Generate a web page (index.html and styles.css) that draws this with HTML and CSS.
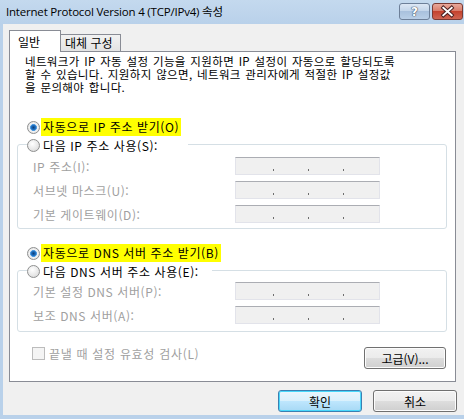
FILE: index.html
```html
<!DOCTYPE html>
<html lang="ko">
<head>
    <meta charset="UTF-8">
    <title>Internet Protocol Version 4 (TCP/IPv4) 속성</title>
    <link rel="stylesheet" href="styles.css">
</head>
<body>
    <div class="window">
        <div class="titlebar">
            <span class="title">Internet Protocol Version 4 (TCP/IPv4) 속성</span>
            <div class="caption-buttons">
                <span class="cap-btn help">?</span>
                <span class="cap-btn close">
                    <svg width="31" height="17" viewBox="0 0 31 17">
                        <path d="M11 4.5 L20 12.5 M20 4.5 L11 12.5" stroke="#4a2020" stroke-width="4" stroke-linecap="square" fill="none"/>
                        <path d="M11 4.5 L20 12.5 M20 4.5 L11 12.5" stroke="#ffffff" stroke-width="2" stroke-linecap="square" fill="none"/>
                    </svg>
                </span>
            </div>
        </div>
        <div class="client">
            <div class="tabs">
                <div class="tab active">일반</div>
                <div class="tab">대체 구성</div>
            </div>
            <div class="panel">
                <p class="desc">네트워크가 IP 자동 설정 기능을 지원하면 IP 설정이 자동으로 할당되도록<br>할 수 있습니다. 지원하지 않으면, 네트워크 관리자에게 적절한 IP 설정값<br>을 문의해야 합니다.</p>

                <label class="radio-row top"><span class="radio checked"></span><span class="hl">자동으로 IP 주소 받기(O)</span></label>
                <fieldset class="group first">
                    <legend class="ip-legend"><span class="radio-row"><span class="radio"></span><span class="radio-text">다음 IP 주소 사용(S):</span></span></legend>
                    <div class="field-row"><span class="field-label">IP 주소(I):</span><span class="ip-box"><i></i><i></i><i></i></span></div>
                    <div class="field-row"><span class="field-label">서브넷 마스크(U):</span><span class="ip-box"><i></i><i></i><i></i></span></div>
                    <div class="field-row"><span class="field-label">기본 게이트웨이(D):</span><span class="ip-box"><i></i><i></i><i></i></span></div>
                </fieldset>

                <label class="radio-row top dns"><span class="radio checked"></span><span class="hl">자동으로 DNS 서버 주소 받기(B)</span></label>
                <fieldset class="group second">
                    <legend class="dns-legend"><span class="radio-row"><span class="radio"></span><span class="radio-text">다음 DNS 서버 주소 사용(E):</span></span></legend>
                    <div class="field-row"><span class="field-label">기본 설정 DNS 서버(P):</span><span class="ip-box"><i></i><i></i><i></i></span></div>
                    <div class="field-row"><span class="field-label">보조 DNS 서버(A):</span><span class="ip-box"><i></i><i></i><i></i></span></div>
                </fieldset>

                <div class="bottom-row">
                    <label class="check-row"><span class="checkbox"></span>끝낼 때 설정 유효성 검사(L)</label>
                    <button class="btn advanced">고급(V)...</button>
                </div>
            </div>
            <div class="footer">
                <button class="btn default">확인</button>
                <button class="btn">취소</button>
            </div>
        </div>
    </div>
</body>
</html>
```

FILE: styles.css
```css
body {
    margin: 0;
    padding: 0;
    font-family: "Noto Sans CJK KR", "Liberation Sans", sans-serif;
    font-size: 12px;
}
.window {
    width: 464px;
    height: 419px;
    background-color: #b9d1ea;
    display: flex;
    flex-direction: column;
    box-sizing: border-box;
    overflow: hidden;
}
.titlebar {
    height: 24px;
    flex: none;
    display: flex;
    justify-content: space-between;
    background: linear-gradient(#c4d9ee, #b9d1ea);
}
.title {
    font-family: "Open Sans", "Noto Sans CJK KR", sans-serif;
    font-size: 11.5px;
    letter-spacing: -0.2px;
    line-height: 24px;
    padding-left: 6px;
    color: #000;
}
.caption-buttons {
    display: flex;
    gap: 2px;
    margin-top: 3px;
    margin-right: 1px;
}
.cap-btn {
    width: 31px;
    height: 17px;
    box-sizing: border-box;
    border: 1px solid #6d7f98;
    border-radius: 3px;
    display: flex;
    align-items: center;
    justify-content: center;
}
.help {
    background: linear-gradient(#dce7f4 0%, #c4d6ea 45%, #a9c1dd 50%, #b9cfe7 100%);
    color: #fff;
    font-family: "DejaVu Sans", sans-serif;
    font-weight: bold;
    font-size: 12px;
    text-shadow: 0 0 1px #3d4d63, 0 0 1px #3d4d63, 0 0 1px #3d4d63;
}
.close {
    border-color: #7a3a33;
    background: linear-gradient(#e9a99b 0%, #d97d6b 45%, #c4432f 50%, #cf6552 100%);
}
.close svg {
    display: block;
}
.client {
    flex: 1;
    margin-left: 3px;
    margin-bottom: 4px;
    background-color: #f0f0f0;
    padding: 6px 8px 3px 6px;
    display: flex;
    flex-direction: column;
}
.tabs {
    height: 21px;
    display: flex;
    align-items: flex-end;
}
.tab {
    height: 17px;
    width: 60px;
    box-sizing: border-box;
    padding-left: 4px;
    border: 1px solid #898c95;
    border-left: none;
    border-bottom: none;
    background: linear-gradient(#f2f2f2, #e3e3e3);
    display: flex;
    align-items: center;
    line-height: 14px;
}
.tab.active {
    width: 52px;
    height: 22px;
    margin-bottom: -1px;
    padding-left: 8px;
    border-left: 1px solid #898c95;
    background: #fff;
    position: relative;
    z-index: 1;
}
.panel {
    background: #fff;
    border: 1px solid #898c95;
    padding: 0 8px 12px 7px;
}
.desc {
    margin: 3px 0 0 8px;
    font-size: 11.5px;
    line-height: 13px;
    height: 39px;
    white-space: nowrap;
    letter-spacing: 0.35px;
    word-spacing: 1px;
}
.radio-row {
    display: flex;
    align-items: center;
    height: 14px;
    letter-spacing: 0.6px;
}
.radio-row.top {
    height: 18px;
    margin: 24px 0 0 10px;
}
.radio-row.dns {
    margin-top: 15px;
}
.radio {
    width: 13px;
    height: 13px;
    box-sizing: border-box;
    border-radius: 50%;
    border: 1px solid #8e8f8f;
    background: radial-gradient(circle at 40% 35%, #ffffff 0%, #e6e6e6 60%, #cfcfcf 100%);
    flex: none;
}
.radio.checked {
    background: radial-gradient(circle, #0b3f7a 0%, #1f6fc0 28%, #5aa5e6 42%, #f4f4f4 48%, #d6d6d6 100%);
}
.hl {
    background: #ffff00;
    height: 18px;
    line-height: 18px;
    margin-left: 1px;
    padding: 0 2px 0 2px;
}
.radio-text {
    margin-left: 3px;
}
.group {
    margin: 0;
    padding: 0 0 5px 0;
    border: 1px solid #d5dfe5;
    border-radius: 3px;
}
.group.second {
    padding-bottom: 7px;
}
.group legend {
    padding: 0;
    margin-left: 9px;
    background: #fff;
}
.group legend .radio-row {
    padding-top: 2px;
}
.ip-legend {
    width: 161px;
}
.dns-legend {
    width: 185px;
}
.field-row {
    display: grid;
    grid-template-columns: 202px 145px;
    align-items: center;
    height: 18px;
    margin-top: 6px;
    padding-left: 15px;
    color: #a0a0a0;
    letter-spacing: 0.6px;
}
.group .field-row:first-of-type {
    margin-top: 5px;
}
.group.second .field-row:first-of-type {
    margin-top: 4px;
}
.ip-box {
    height: 18px;
    box-sizing: border-box;
    border: 1px solid #e2e3ea;
    border-top-color: #abadb3;
    background: #f0f0f0;
    display: flex;
    padding-left: 37px;
    gap: 34px;
}
.ip-box i {
    width: 1px;
    height: 2px;
    margin-top: 11px;
    background: #6d6d6d;
}
.bottom-row {
    margin-top: 15px;
    display: flex;
    justify-content: space-between;
    align-items: flex-start;
}
.check-row {
    display: flex;
    align-items: center;
    margin-left: 15px;
    height: 13px;
    color: #a0a0a0;
    letter-spacing: 0.7px;
}
.checkbox {
    width: 13px;
    height: 13px;
    box-sizing: border-box;
    border: 1px solid #bcbcbc;
    background: #f4f4f4;
    margin-right: 4px;
}
.btn {
    font-family: "Noto Sans CJK KR", sans-serif;
    font-size: 12px;
    color: #000;
    width: 84px;
    height: 22px;
    padding: 0;
    border: 1px solid #707070;
    border-radius: 3px;
    background: linear-gradient(#f2f2f2 0%, #ebebeb 50%, #dddddd 51%, #cfcfcf 100%);
    box-shadow: inset 0 0 0 1px #fcfcfc;
}
.btn.advanced {
    width: 82px;
    margin-right: 1px;
}
.btn.default {
    border-color: #3c7fb1;
    background: linear-gradient(#eaf6fd 0%, #d9f0fc 50%, #bee6fd 51%, #a7d9f5 100%);
    box-shadow: inset 0 0 0 1px #48d8fb;
}
.footer {
    margin-top: 8px;
    margin-right: -1px;
    display: flex;
    justify-content: flex-end;
    gap: 11px;
}
```
